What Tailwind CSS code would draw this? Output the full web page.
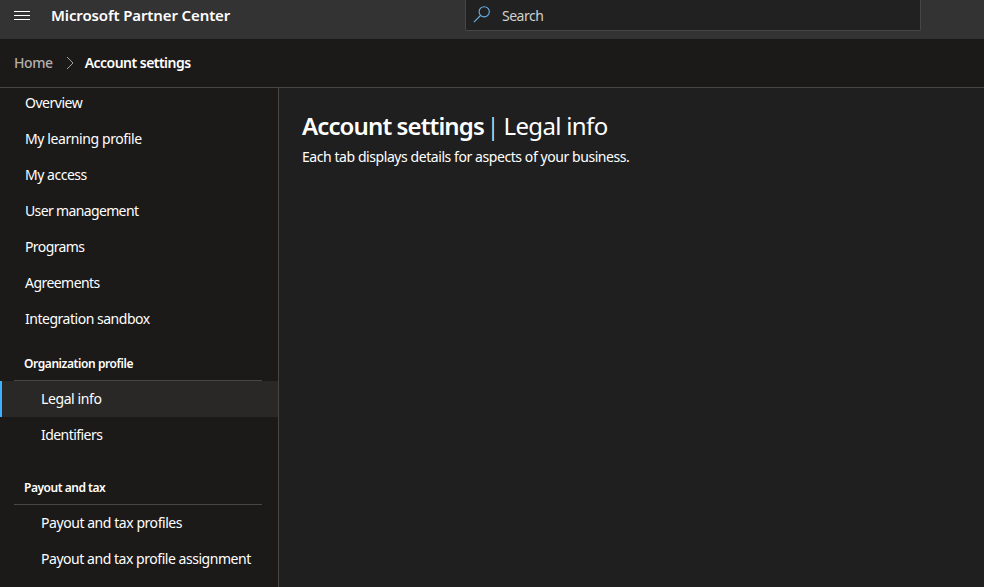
<!DOCTYPE html>
<html lang="en">

<head>
    <meta charset="UTF-8">
    <meta name="viewport" content="width=device-width, initial-scale=1.0">
    <title>Account settings | Legal info</title>
    <script src="https://cdn.jsdelivr.net/npm/@tailwindcss/browser@4"></script>
</head>

<body class="flex h-screen flex-col overflow-hidden bg-[#1b1a19] font-['Segoe_UI','Noto_Sans',sans-serif] text-sm text-white">
    <header class="flex h-[39px] shrink-0 bg-[#333333]">
        <div class="flex h-8 w-[465px] items-center pl-3.5">
            <button class="mr-[21px]" aria-label="Menu">
                <svg class="block" width="16" height="10" viewBox="0 0 16 10" fill="none" stroke="#fff" shape-rendering="crispEdges">
                    <path d="M0 .5h16M0 4.5h16M0 8.5h16" />
                </svg>
            </button>
            <span class="text-[15px] font-semibold tracking-[-0.12px]">Microsoft Partner Center</span>
        </div>
        <div class="flex h-[31px] w-[456px] items-center rounded-b-xs border border-t-0 border-[#484644] bg-[#212121] pl-[7px]">
            <svg class="mb-px" width="17" height="17" viewBox="0 0 17 17" fill="none" stroke="#69afe5" stroke-width="1.1">
                <circle cx="11.2" cy="5.8" r="5.1" />
                <path d="M7.5 9.5.9 16.1" />
            </svg>
            <span class="ml-[12px] pt-0.5 tracking-[-0.5px] text-[#d2d0ce]">Search</span>
        </div>
    </header>

    <nav class="flex h-[49px] shrink-0 items-center border-b border-[#484644] pl-3.5">
        <a href="#" class="font-medium tracking-[-0.4px] text-[#b3b0ad]">Home</a>
        <svg class="mr-[11px] ml-[13px]" width="8" height="14" viewBox="0 0 8 14" fill="none" stroke="#a19f9d">
            <path d="M1 1l6 6-6 6" />
        </svg>
        <span class="font-semibold tracking-[-0.53px]">Account settings</span>
    </nav>

    <div class="flex min-h-0 flex-1">
        <aside class="w-[279px] shrink-0 overflow-hidden border-r border-[#484644] tracking-[-0.48px]">
            <ul class="-mt-[3px]">
                <li class="flex h-9 items-center pl-[25px]">Overview</li>
                <li class="flex h-9 items-center pl-[25px] tracking-[-0.4px]">My learning profile</li>
                <li class="flex h-9 items-center pl-[25px]">My access</li>
                <li class="flex h-9 items-center pl-[25px] tracking-[-0.64px]">User management</li>
                <li class="flex h-9 items-center pl-[25px] tracking-[-0.6px]">Programs</li>
                <li class="flex h-9 items-center pl-[25px] tracking-[-0.55px]">Agreements</li>
                <li class="flex h-9 items-center pl-[25px]">Integration sandbox</li>
            </ul>

            <h3 class="mr-4 ml-3.5 flex h-11 items-center border-b border-[#484644] pt-[11px] pl-2.5 text-xs font-semibold tracking-[-0.42px]">Organization profile</h3>
            <ul>
                <li class="flex h-9 items-center border-l-2 border-[#3db1ff] bg-[#292827] pl-[39px] tracking-[-0.4px]">Legal info</li>
                <li class="flex h-9 items-center pl-[41px] tracking-[-0.55px]">Identifiers</li>
            </ul>

            <h3 class="mt-2 mr-4 ml-3.5 flex h-11 items-center border-b border-[#484644] pt-[11px] pl-2.5 text-xs font-semibold">Payout and tax</h3>
            <ul>
                <li class="flex h-9 items-center pl-[41px] tracking-[-0.44px]">Payout and tax profiles</li>
                <li class="flex h-9 items-center pl-[41px] tracking-[-0.46px]">Payout and tax profile assignment</li>
            </ul>
        </aside>

        <main class="flex-1 bg-[#1f1f1f] pt-[22px] pl-[23px]">
            <h1 class="text-2xl tracking-[-0.65px]"><span class="mr-[-3px] font-semibold tracking-[-0.88px]">Account settings</span> <span class="mr-[-1px] font-light">|</span> Legal info</h1>
            <p class="mt-[5px] tracking-[-0.43px]">Each tab displays details for aspects of your business.</p>
        </main>
    </div>
</body>

</html>
